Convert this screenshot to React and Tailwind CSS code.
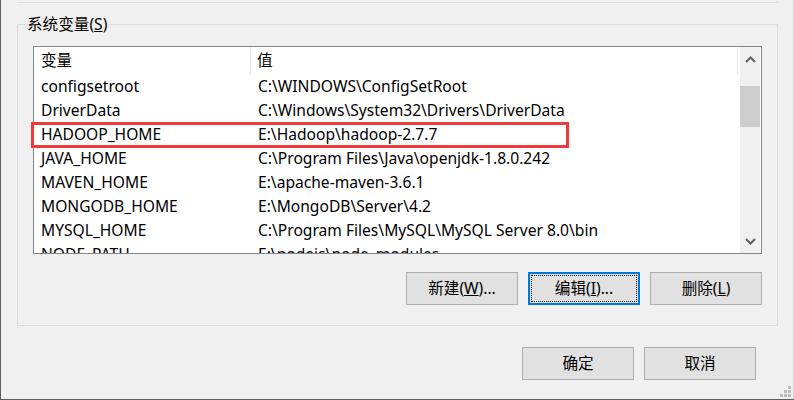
import React from "react";

const rows = [
  ["configsetroot", "C:\\WINDOWS\\ConfigSetRoot"],
  ["DriverData", "C:\\Windows\\System32\\Drivers\\DriverData"],
  ["HADOOP_HOME", "E:\\Hadoop\\hadoop-2.7.7"],
  ["JAVA_HOME", "C:\\Program Files\\Java\\openjdk-1.8.0.242"],
  ["MAVEN_HOME", "E:\\apache-maven-3.6.1"],
  ["MONGODB_HOME", "E:\\MongoDB\\Server\\4.2"],
  ["MYSQL_HOME", "C:\\Program Files\\MySQL\\MySQL Server 8.0\\bin"],
  ["NODE_PATH", "E:\\nodejs\\node_modules"],
];

function WinButton({ children, focused }) {
  if (focused) {
    return (
      <div className="w-[112px] h-[33px] border-2 border-[#0078d7] bg-[#e1e1e1] p-[1px]">
        <div className="w-full h-full border border-dotted border-black flex items-center justify-center">
          {children}
        </div>
      </div>
    );
  }
  return (
    <div className="w-[112px] h-[33px] border border-[#adadad] bg-[#e1e1e1] flex items-center justify-center">
      {children}
    </div>
  );
}

function Chevron({ down }) {
  return (
    <svg width="11" height="7" viewBox="0 0 11 7" className="block">
      <path
        d={down ? "M1 1 L5.5 5.5 L10 1" : "M1 6 L5.5 1.5 L10 6"}
        fill="none"
        stroke="#606060"
        strokeWidth="2"
      />
    </svg>
  );
}

function Grip() {
  const dots = [
    [8, 0],
    [4, 4],
    [8, 4],
    [0, 8],
    [4, 8],
    [8, 8],
  ];
  return (
    <svg width="11" height="11" viewBox="0 0 11 11">
      {dots.map(([x, y], i) => (
        <rect key={i} x={x} y={y} width="3" height="3" fill="#bcbcbc" />
      ))}
    </svg>
  );
}

export default function App() {
  return (
    <div
      className="relative w-[794px] h-[400px] bg-[#f0f0f0] border-l border-b border-[#5c5c5c] overflow-hidden text-[15.6px] text-black flex flex-col"
      style={{ fontFamily: '"Noto Sans", "Noto Sans CJK SC", sans-serif' }}
    >
      {/* end of the previous group box */}
      <div className="ml-[16px] w-[761px] h-[3px] border-b border-r border-[#dcdcdc]"></div>

      {/* System variables group */}
      <div className="relative ml-[16px] mt-[21px] w-[761px] h-[302px] border border-[#dcdcdc] flex flex-col">
        <div className="absolute left-[7px] top-[-12px] px-[2px] bg-[#f0f0f0] leading-[22px]">
          系统变量(<span className="underline">S</span>)
        </div>

        {/* list view */}
        <div className="relative ml-[15px] mt-[21px] w-[729px] h-[208px] border border-[#828790] bg-white flex">
          <div className="flex-1 flex flex-col overflow-hidden">
            <div className="flex h-[27px] shrink-0 items-center">
              <div className="w-[217px] h-full pl-[7px] pt-[1px] flex items-center border-r border-[#e5e5e5]">
                变量
              </div>
              <div className="w-[487px] h-full pl-[6px] pt-[1px] flex items-center border-r border-[#e5e5e5]">
                值
              </div>
            </div>
            {rows.map(([name, value]) => (
              <div key={name} className="flex h-[24px] shrink-0 items-center pt-[1px] whitespace-nowrap">
                <div className="w-[217px] pl-[7px]">{name}</div>
                <div className="pl-[7px]">{value}</div>
              </div>
            ))}
          </div>

          {/* scrollbar */}
          <div className="w-[20px] mr-[1px] bg-[#f0f0f0] flex flex-col items-center">
            <div className="h-[24px] w-full flex items-center justify-center">
              <Chevron />
            </div>
            <div className="mt-[15px] w-full h-[41px] bg-[#cdcdcd]"></div>
            <div className="flex-1"></div>
            <div className="h-[24px] w-full flex items-center justify-center">
              <Chevron down />
            </div>
          </div>

          {/* annotation box */}
          <div className="absolute left-[-3px] top-[75px] w-[538px] h-[26px] border-[3px] border-[#ee3b3b]"></div>
        </div>

        <div className="mt-[18px] mr-[15px] flex justify-end gap-[10px]">
          <WinButton>
            新建(<span className="underline">W</span>)...
          </WinButton>
          <WinButton focused>
            编辑(<span className="underline">I</span>)...
          </WinButton>
          <WinButton>
            删除(<span className="underline">L</span>)
          </WinButton>
        </div>
      </div>

      <div className="mt-[21px] ml-[521px] flex gap-[10px]">
        <WinButton>确定</WinButton>
        <WinButton>取消</WinButton>
      </div>

      <div className="absolute right-0 top-0 h-full w-[1px] bg-[#d4d4d4]"></div>
      <div className="absolute right-[3px] bottom-[2px]">
        <Grip />
      </div>
    </div>
  );
}
